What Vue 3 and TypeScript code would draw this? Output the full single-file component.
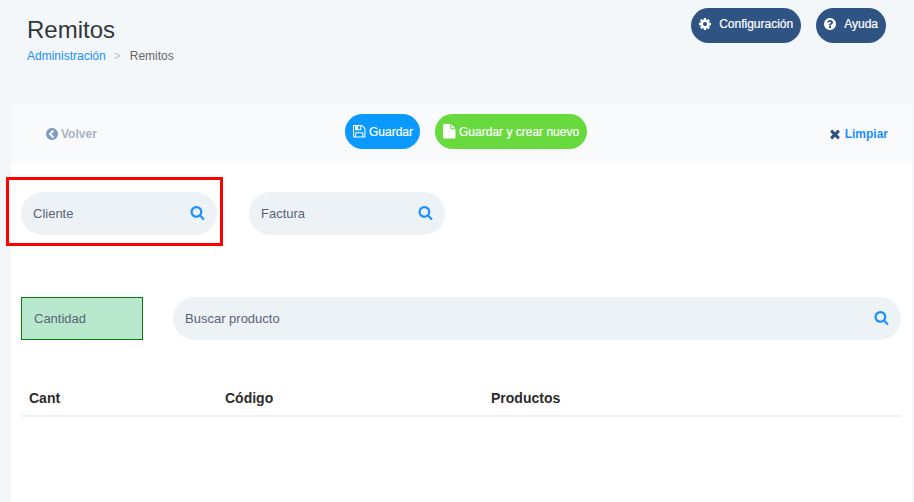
<script setup lang="ts">
const icons: Record<string, string> = {
  search: 'M1216 832q0-185-131.500-316.500t-316.500-131.500-316.500 131.500-131.500 316.500 131.500 316.500 316.500 131.500 316.500-131.500 131.500-316.500zm512 832q0 52-38 90t-90 38q-54 0-90-38l-343-342q-179 124-399 124-143 0-273.500-55.500t-225-150-150-225-55.500-273.500 55.500-273.500 150-225 225-150 273.500-55.500 273.500 55.500 225 150 150 225 55.500 273.500q0 220-124 399l343 343q37 37 37 90z',
  cog: 'M1152 896q0-106-75-181t-181-75-181 75-75 181 75 181 181 75 181-75 75-181zm512-109v222q0 12-8 23t-20 13l-185 28q-19 54-39 91 35 50 107 138 10 12 10 25t-9 23q-27 37-99 108t-94 71q-12 0-26-9l-138-108q-44 23-91 38-16 136-29 186-7 28-36 28h-222q-14 0-24.500-8.500t-11.500-21.500l-28-184q-49-16-90-37l-141 107q-10 9-25 9-14 0-25-11-126-114-165-168-7-10-7-23 0-12 8-23 15-21 51-66.500t54-70.500q-27-50-41-99l-183-27q-13-2-21-12.500t-8-23.500v-222q0-12 8-23t19-13l186-28q14-46 39-92-40-57-107-138-10-12-10-24 0-10 9-23 26-36 98.500-107.500t94.500-71.500q13 0 26 10l138 107q44-23 91-38 16-136 29-186 7-28 36-28h222q14 0 24.500 8.500t11.500 21.500l28 184q49 16 90 37l142-107q9-9 24-9 13 0 25 10 129 119 165 170 7 8 7 22 0 12-8 23-15 21-51 66.500t-54 70.500q26 50 41 98l183 28q13 2 21 12.500t8 23.500z',
  question: 'M1024 1376v-192q0-14-9-23t-23-9h-192q-14 0-23 9t-9 23v192q0 14 9 23t23 9h192q14 0 23-9t9-23zm256-672q0-88-55.500-163t-138.500-116-170-41q-243 0-371 213-15 24 8 42l132 100q7 6 19 6 16 0 25-12 53-68 86-92 34-24 86-24 48 0 85.500 26t37.500 59q0 38-20 61t-68 45q-63 28-115.500 86.500t-52.500 125.500v36q0 14 9 23t23 9h192q14 0 23-9t9-23q0-19 21.500-49.500t54.500-49.500q32-18 49-28.500t46-35 44.500-48 28-60.500 12.500-81zm384 192q0 209-103 385.500t-279.500 279.500-385.500 103-385.500-103-279.500-279.500-103-385.500 103-385.500 279.500-279.500 385.500-103 385.500 103 279.500 279.500 103 385.500z',
  back: 'M1037 1395l102-102q19-19 19-45t-19-45l-307-307 307-307q19-19 19-45t-19-45l-102-102q-19-19-45-19t-45 19l-454 454q-19 19-19 45t19 45l454 454q19 19 45 19t45-19zm627-499q0 209-103 385.500t-279.500 279.500-385.500 103-385.500-103-279.500-279.500-103-385.500 103-385.500 279.500-279.500 385.500-103 385.500 103 279.500 279.500 103 385.500z',
  times: 'M1490 1322q0 40-28 68l-136 136q-28 28-68 28t-68-28l-294-294-294 294q-28 28-68 28t-68-28l-136-136q-28-28-28-68t28-68l294-294-294-294q-28-28-28-68t28-68l136-136q28-28 68-28t68 28l294 294 294-294q28-28 68-28t68 28l136 136q28 28 28 68t-28 68l-294 294 294 294q28 28 28 68z',
  save: 'M512 1536h768v-384h-768v384zm896 0h128v-896q0-14-10-38.500t-20-34.500l-281-281q-10-10-34-20t-39-10v416q0 40-28 68t-68 28h-576q-40 0-68-28t-28-68v-416h-128v1280h128v-416q0-40 28-68t68-28h832q40 0 68 28t28 68v416zm-384-928v-320q0-13-9.500-22.500t-22.500-9.500h-192q-13 0-22.500 9.500t-9.500 22.500v320q0 13 9.500 22.500t22.500 9.500h192q13 0 22.500-9.500t9.500-22.500zm640 32v928q0 40-28 68t-68 28h-1344q-40 0-68-28t-28-68v-1344q0-40 28-68t68-28h928q40 0 88 20t76 48l280 280q28 28 48 76t20 88z',
  file: 'M1152 512v-472q22 14 36 28l408 408q14 14 28 36h-472zm-128 32q0 40 28 68t68 28h544v1056q0 40-28 68t-68 28h-1344q-40 0-68-28t-28-68v-1600q0-40 28-68t68-28h800v544z',
}

const columns = ['Cant', 'Código', 'Productos']
</script>

<template>
  <div class="page">
    <header class="page-header">
      <div>
        <h1 class="title">Remitos</h1>
        <div class="breadcrumb">
          <span class="crumb-link">Administración</span>
          <span class="crumb-sep">&gt;</span>
          <span>Remitos</span>
        </div>
      </div>
      <div class="header-actions">
        <button class="pill-dark">
          <svg class="icon-top" viewBox="0 0 1792 1792"><path :d="icons.cog" /></svg>
          Configuración
        </button>
        <button class="pill-dark">
          <svg class="icon-top" viewBox="0 0 1792 1792"><path :d="icons.question" /></svg>
          Ayuda
        </button>
      </div>
    </header>

    <main class="card">
      <div class="toolbar">
        <span class="back">
          <svg class="icon-sm" viewBox="0 0 1792 1792"><path :d="icons.back" /></svg>
          Volver
        </span>
        <div class="toolbar-center">
          <button class="btn btn-blue">
            <svg class="icon-btn" viewBox="0 0 1792 1792"><path :d="icons.save" /></svg>
            Guardar
          </button>
          <button class="btn btn-green">
            <svg class="icon-btn" viewBox="0 0 1792 1792"><path :d="icons.file" /></svg>
            Guardar y crear nuevo
          </button>
        </div>
        <span class="clear">
          <svg class="icon-sm" viewBox="0 0 1792 1792"><path :d="icons.times" /></svg>
          Limpiar
        </span>
      </div>

      <div class="fields-row">
        <div class="field field-short highlighted">
          <span>Cliente</span>
          <svg class="icon-search" viewBox="0 0 1792 1792"><path :d="icons.search" /></svg>
        </div>
        <div class="field field-short">
          <span>Factura</span>
          <svg class="icon-search" viewBox="0 0 1792 1792"><path :d="icons.search" /></svg>
        </div>
      </div>

      <div class="product-row">
        <div class="qty">Cantidad</div>
        <div class="field field-grow">
          <span>Buscar producto</span>
          <svg class="icon-search" viewBox="0 0 1792 1792"><path :d="icons.search" /></svg>
        </div>
      </div>

      <div class="table-head">
        <span v-for="col in columns" :key="col">{{ col }}</span>
      </div>
    </main>
  </div>
</template>

<style scoped>
.page {
  width: 914px;
  height: 502px;
  overflow: hidden;
  background: #f3f7fa;
  font-family: "Liberation Sans", Arial, sans-serif;
  box-sizing: border-box;
  padding-left: 11px;
  padding-right: 2px;
}

.page-header {
  height: 104px;
  box-sizing: border-box;
  display: flex;
  justify-content: space-between;
  align-items: flex-start;
  padding: 8px 26px 0 16px;
}

.title {
  margin: 8px 0 0;
  font-size: 24px;
  font-weight: 400;
  line-height: 28px;
  color: #32373c;
}

.breadcrumb {
  margin-top: 4px;
  font-size: 12px;
  line-height: 16px;
  color: #666;
  display: flex;
}

.crumb-link {
  color: #1890ff;
}

.crumb-sep {
  color: #c4c4c4;
  margin: 0 9px 0 8px;
}

.header-actions {
  display: flex;
  gap: 15px;
}

.pill-dark {
  height: 35px;
  border: none;
  border-radius: 18px;
  background: #2f5483;
  color: #fff;
  font: 400 12px "Liberation Sans", Arial, sans-serif;
  padding: 0 8px 4px 7px;
  display: flex;
  align-items: center;
  gap: 7px;
  -webkit-text-stroke: 0.2px #fff;
}

.icon-top {
  width: 14px;
  height: 14px;
  fill: #fff;
}

.card {
  height: 398px;
  background: #fff;
  border-radius: 4px 4px 0 0;
}

.toolbar {
  height: 59px;
  background: #f8fafc;
  border-radius: 4px 4px 0 0;
  display: flex;
  align-items: center;
  justify-content: space-between;
  padding: 0 24px 0 34px;
  font-size: 12px;
  font-weight: 700;
  position: relative;
}

.back {
  color: #aab2bd;
  display: flex;
  align-items: center;
  gap: 2px;
}

.back .icon-sm {
  fill: #7f9cc2;
}

.toolbar-center {
  position: absolute;
  left: 334px;
  top: 10px;
  display: flex;
  gap: 15px;
}

.btn {
  height: 35px;
  border: none;
  border-radius: 18px;
  color: #fff;
  font: 400 12px "Liberation Sans", Arial, sans-serif;
  -webkit-text-stroke: 0.2px #fff;
  display: flex;
  align-items: center;
  gap: 2.5px;
  padding: 0 7px;
}

.icon-btn {
  width: 14.5px;
  height: 14.5px;
  flex: none;
  fill: #fff;
}

.btn-blue {
  background: #0a9aff;
}

.btn-green {
  background: #68da3e;
  padding-right: 8px;
}

.icon-sm {
  width: 14px;
  height: 14px;
  flex: none;
}

.clear {
  color: #1890ff;
  display: flex;
  align-items: center;
  gap: 3px;
}

.clear .icon-sm {
  fill: #2f4f7f;
}

.fields-row {
  display: flex;
  gap: 32px;
  padding: 29px 0 0 10px;
}

.field {
  height: 43px;
  box-sizing: border-box;
  border-radius: 22px;
  background: #edf2f7;
  color: #5a6478;
  font-size: 13px;
  display: flex;
  align-items: center;
  justify-content: space-between;
  padding: 0 12px 0 12px;
}

.field-short {
  width: 196px;
}

.field-grow {
  flex: 1;
}

.highlighted {
  position: relative;
}

.highlighted::after {
  content: "";
  position: absolute;
  left: -15px;
  top: -15px;
  width: 217px;
  height: 69px;
  box-sizing: border-box;
  border: 3px solid #f00;
}

.icon-search {
  width: 15px;
  height: 15px;
  fill: #1890ff;
  flex: none;
  margin-top: -2px;
}

.product-row {
  display: flex;
  gap: 30px;
  padding: 62px 11px 0 10px;
}

.qty {
  width: 122px;
  height: 43px;
  box-sizing: border-box;
  border: 1px solid #0a7a0a;
  background: #b8e8ce;
  color: #5a6478;
  font-size: 13px;
  line-height: 41px;
  padding-left: 12px;
}

.table-head {
  margin: 36px 11px 0 10px;
  height: 41px;
  box-sizing: border-box;
  border-bottom: 2px solid #f1f2f3;
  display: grid;
  grid-template-columns: 196px 266px 1fr;
  padding: 13px 0 0 8px;
  font-size: 14px;
  font-weight: 700;
  line-height: 18px;
  color: #2b2b2b;
}
</style>
